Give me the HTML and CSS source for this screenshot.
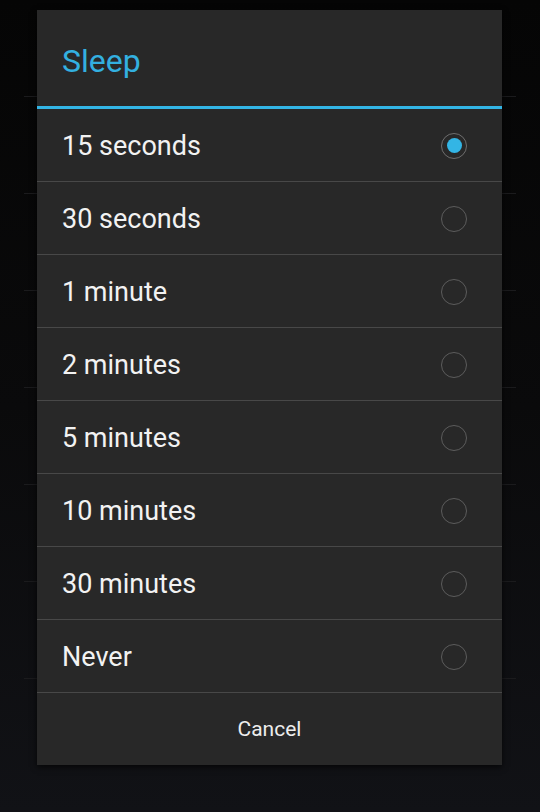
FILE: index.html
```html
<!DOCTYPE html>
<html lang="en">
<head>
  <meta charset="UTF-8" />
  <title>Sleep</title>
  <link rel="stylesheet" href="styles.css">
</head>
<body>

  <!-- Settings list underneath the dialog -->
  <div class="bg-list">
    <div class="bg-row"></div>
    <div class="bg-row"></div>
    <div class="bg-row"></div>
    <div class="bg-row"></div>
    <div class="bg-row"></div>
    <div class="bg-row"></div>
    <div class="bg-row"></div>
  </div>

  <!-- Sleep dialog -->
  <div class="dialog">
    <div class="dialog-title">Sleep</div>
    <ul class="options">
      <li class="option"><span>15 seconds</span><span class="radio checked"></span></li>
      <li class="option"><span>30 seconds</span><span class="radio"></span></li>
      <li class="option"><span>1 minute</span><span class="radio"></span></li>
      <li class="option"><span>2 minutes</span><span class="radio"></span></li>
      <li class="option"><span>5 minutes</span><span class="radio"></span></li>
      <li class="option"><span>10 minutes</span><span class="radio"></span></li>
      <li class="option"><span>30 minutes</span><span class="radio"></span></li>
      <li class="option"><span>Never</span><span class="radio"></span></li>
    </ul>
    <button class="btn-cancel">Cancel</button>
  </div>

</body>
</html>
```

FILE: styles.css
```css
* {
  box-sizing: border-box;
}

html, body {
  height: 100%;
}

body {
  margin: 0;
  font-family: Roboto, 'Noto Sans', sans-serif;
  background: linear-gradient(to bottom, #050505 0%, #0a0a0b 50%, #111216 100%);
  position: relative;
  overflow: hidden;
}

.bg-list {
  padding: 0 24px;
}

.bg-row {
  height: 97px;
  border-bottom: 1px solid #1b1b1d;
}

/* Dialog */
.dialog {
  position: absolute;
  top: 10px;
  left: 37px;
  width: 465px;
  background: #282828;
  box-shadow: 0 2px 6px rgba(0,0,0,0.7);
}

.dialog-title {
  height: 99px;
  padding: 5px 25px 0;
  display: flex;
  align-items: center;
  font-size: 32px;
  color: #33b0e0;
  border-bottom: 3px solid #33b5e5;
}

.options {
  list-style: none;
  margin: 0;
  padding: 0;
}

.option {
  height: 73px;
  padding: 1px 35px 0 25px;
  display: flex;
  align-items: center;
  justify-content: space-between;
  font-size: 27px;
  color: #f2f2f2;
  border-bottom: 1px solid #484848;
}

.radio {
  width: 26px;
  height: 26px;
  border-radius: 50%;
  border: 1.5px solid #5c5c5c;
  display: flex;
  align-items: center;
  justify-content: center;
}

.radio.checked {
  border-color: #6e6e6e;
}

.radio.checked::after {
  content: '';
  width: 15px;
  height: 15px;
  border-radius: 50%;
  background: #33b5e5;
}

.btn-cancel {
  display: block;
  width: 100%;
  height: 72px;
  border: none;
  background: none;
  font-family: inherit;
  font-size: 21px;
  color: #ededed;
  cursor: pointer;
}
```
